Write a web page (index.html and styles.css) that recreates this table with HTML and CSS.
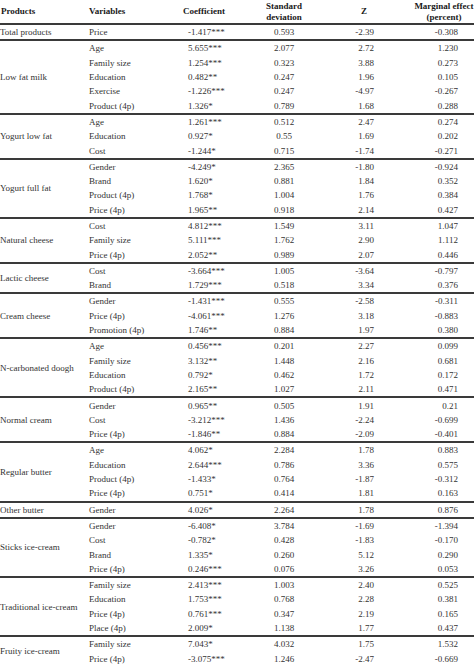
FILE: index.html
```html
<!DOCTYPE html>
<html>
<head>
<meta charset="utf-8">
<link rel="stylesheet" href="styles.css">
</head>
<body>
<table class="tbl">
<colgroup>
<col class="c1"><col class="c2"><col class="c3"><col class="c4"><col class="c5"><col class="c6">
</colgroup>
<thead>
<tr class="hd"><th class="t-l">Products</th><th class="t-l">Variables</th><th>Coefficient</th><th>Standard<br>deviation</th><th>Z</th><th>Marginal effect<br>(percent)</th></tr>
</thead>
<tbody>
<tr class="g"><td class="p">Total products</td><td class="v">Price</td><td class="co">-1.417***</td><td class="sd">0.593</td><td class="z">-2.39</td><td class="me">-0.308</td></tr>

<tr class="g"><td class="p" rowspan="5">Low fat milk</td><td class="v">Age</td><td class="co">5.655***</td><td class="sd">2.077</td><td class="z">2.72</td><td class="me">1.230</td></tr>
<tr class="r"><td class="v">Family size</td><td class="co">1.254***</td><td class="sd">0.323</td><td class="z">3.88</td><td class="me">0.273</td></tr>
<tr class="r"><td class="v">Education</td><td class="co">0.482**</td><td class="sd">0.247</td><td class="z">1.96</td><td class="me">0.105</td></tr>
<tr class="r"><td class="v">Exercise</td><td class="co">-1.226***</td><td class="sd">0.247</td><td class="z">-4.97</td><td class="me">-0.267</td></tr>
<tr class="r"><td class="v">Product (4p)</td><td class="co">1.326*</td><td class="sd">0.789</td><td class="z">1.68</td><td class="me">0.288</td></tr>

<tr class="g"><td class="p" rowspan="3">Yogurt low fat</td><td class="v">Age</td><td class="co">1.261***</td><td class="sd">0.512</td><td class="z">2.47</td><td class="me">0.274</td></tr>
<tr class="r"><td class="v">Education</td><td class="co">0.927*</td><td class="sd">0.55</td><td class="z">1.69</td><td class="me">0.202</td></tr>
<tr class="r"><td class="v">Cost</td><td class="co">-1.244*</td><td class="sd">0.715</td><td class="z">-1.74</td><td class="me">-0.271</td></tr>

<tr class="g"><td class="p" rowspan="4">Yogurt full fat</td><td class="v">Gender</td><td class="co">-4.249*</td><td class="sd">2.365</td><td class="z">-1.80</td><td class="me">-0.924</td></tr>
<tr class="r"><td class="v">Brand</td><td class="co">1.620*</td><td class="sd">0.881</td><td class="z">1.84</td><td class="me">0.352</td></tr>
<tr class="r"><td class="v">Product (4p)</td><td class="co">1.768*</td><td class="sd">1.004</td><td class="z">1.76</td><td class="me">0.384</td></tr>
<tr class="r"><td class="v">Price (4p)</td><td class="co">1.965**</td><td class="sd">0.918</td><td class="z">2.14</td><td class="me">0.427</td></tr>

<tr class="g"><td class="p" rowspan="3">Natural cheese</td><td class="v">Cost</td><td class="co">4.812***</td><td class="sd">1.549</td><td class="z">3.11</td><td class="me">1.047</td></tr>
<tr class="r"><td class="v">Family size</td><td class="co">5.111***</td><td class="sd">1.762</td><td class="z">2.90</td><td class="me">1.112</td></tr>
<tr class="r"><td class="v">Price (4p)</td><td class="co">2.052**</td><td class="sd">0.989</td><td class="z">2.07</td><td class="me">0.446</td></tr>

<tr class="g"><td class="p" rowspan="2">Lactic cheese</td><td class="v">Cost</td><td class="co">-3.664***</td><td class="sd">1.005</td><td class="z">-3.64</td><td class="me">-0.797</td></tr>
<tr class="r"><td class="v">Brand</td><td class="co">1.729***</td><td class="sd">0.518</td><td class="z">3.34</td><td class="me">0.376</td></tr>

<tr class="g"><td class="p" rowspan="3">Cream cheese</td><td class="v">Gender</td><td class="co">-1.431***</td><td class="sd">0.555</td><td class="z">-2.58</td><td class="me">-0.311</td></tr>
<tr class="r"><td class="v">Price (4p)</td><td class="co">-4.061***</td><td class="sd">1.276</td><td class="z">3.18</td><td class="me">-0.883</td></tr>
<tr class="r"><td class="v">Promotion (4p)</td><td class="co">1.746**</td><td class="sd">0.884</td><td class="z">1.97</td><td class="me">0.380</td></tr>

<tr class="g"><td class="p" rowspan="4">N-carbonated doogh</td><td class="v">Age</td><td class="co">0.456***</td><td class="sd">0.201</td><td class="z">2.27</td><td class="me">0.099</td></tr>
<tr class="r"><td class="v">Family size</td><td class="co">3.132**</td><td class="sd">1.448</td><td class="z">2.16</td><td class="me">0.681</td></tr>
<tr class="r"><td class="v">Education</td><td class="co">0.792*</td><td class="sd">0.462</td><td class="z">1.72</td><td class="me">0.172</td></tr>
<tr class="r"><td class="v">Product (4p)</td><td class="co">2.165**</td><td class="sd">1.027</td><td class="z">2.11</td><td class="me">0.471</td></tr>

<tr class="g"><td class="p" rowspan="3">Normal cream</td><td class="v">Gender</td><td class="co">0.965**</td><td class="sd">0.505</td><td class="z">1.91</td><td class="me">0.21</td></tr>
<tr class="r"><td class="v">Cost</td><td class="co">-3.212***</td><td class="sd">1.436</td><td class="z">-2.24</td><td class="me">-0.699</td></tr>
<tr class="r"><td class="v">Price (4p)</td><td class="co">-1.846**</td><td class="sd">0.884</td><td class="z">-2.09</td><td class="me">-0.401</td></tr>

<tr class="g"><td class="p" rowspan="4">Regular butter</td><td class="v">Age</td><td class="co">4.062*</td><td class="sd">2.284</td><td class="z">1.78</td><td class="me">0.883</td></tr>
<tr class="r"><td class="v">Education</td><td class="co">2.644***</td><td class="sd">0.786</td><td class="z">3.36</td><td class="me">0.575</td></tr>
<tr class="r"><td class="v">Product (4p)</td><td class="co">-1.433*</td><td class="sd">0.764</td><td class="z">-1.87</td><td class="me">-0.312</td></tr>
<tr class="r"><td class="v">Price (4p)</td><td class="co">0.751*</td><td class="sd">0.414</td><td class="z">1.81</td><td class="me">0.163</td></tr>

<tr class="g"><td class="p">Other butter</td><td class="v">Gender</td><td class="co">4.026*</td><td class="sd">2.264</td><td class="z">1.78</td><td class="me">0.876</td></tr>

<tr class="g"><td class="p" rowspan="4">Sticks ice-cream</td><td class="v">Gender</td><td class="co">-6.408*</td><td class="sd">3.784</td><td class="z">-1.69</td><td class="me">-1.394</td></tr>
<tr class="r"><td class="v">Cost</td><td class="co">-0.782*</td><td class="sd">0.428</td><td class="z">-1.83</td><td class="me">-0.170</td></tr>
<tr class="r"><td class="v">Brand</td><td class="co">1.335*</td><td class="sd">0.260</td><td class="z">5.12</td><td class="me">0.290</td></tr>
<tr class="r"><td class="v">Price (4p)</td><td class="co">0.246***</td><td class="sd">0.076</td><td class="z">3.26</td><td class="me">0.053</td></tr>

<tr class="g"><td class="p" rowspan="4">Traditional ice-cream</td><td class="v">Family size</td><td class="co">2.413***</td><td class="sd">1.003</td><td class="z">2.40</td><td class="me">0.525</td></tr>
<tr class="r"><td class="v">Education</td><td class="co">1.753***</td><td class="sd">0.768</td><td class="z">2.28</td><td class="me">0.381</td></tr>
<tr class="r"><td class="v">Price (4p)</td><td class="co">0.761***</td><td class="sd">0.347</td><td class="z">2.19</td><td class="me">0.165</td></tr>
<tr class="r"><td class="v">Place (4p)</td><td class="co">2.009*</td><td class="sd">1.138</td><td class="z">1.77</td><td class="me">0.437</td></tr>

<tr class="g"><td class="p" rowspan="2">Fruity ice-cream</td><td class="v">Family size</td><td class="co">7.043*</td><td class="sd">4.032</td><td class="z">1.75</td><td class="me">1.532</td></tr>
<tr class="r"><td class="v">Price (4p)</td><td class="co">-3.075***</td><td class="sd">1.246</td><td class="z">-2.47</td><td class="me">-0.669</td></tr>
</tbody>
</table>
</body>
</html>
```

FILE: styles.css
```css
html, body {
  margin: 0;
  padding: 0;
  background: #ffffff;
  overflow: hidden;
}

body {
  width: 474px;
  height: 666px;
}

.tbl {
  width: 492px;
  table-layout: fixed;
  border-collapse: separate;
  border-spacing: 0;
  font-family: "Liberation Serif", "Times New Roman", serif;
  font-size: 9px;
  color: #333333;
}

.c1 { width: 88px; }
.c2 { width: 84px; }
.c3 { width: 64px; }
.c4 { width: 96px; }
.c5 { width: 64px; }
.c6 { width: 96px; }

.hd { height: 23px; }

.hd th {
  padding: 0;
  line-height: 11px;
  font-weight: bold;
  color: #1a1a1a;
  text-align: center;
  vertical-align: middle;
  white-space: nowrap;
}

.hd th.t-l {
  text-align: left;
}

.hd th:first-child {
  padding-left: 1px;
}

.hd th:nth-child(2) {
  padding-left: 1px;
}

td {
  padding: 0;
  line-height: 10px;
  vertical-align: middle;
  white-space: nowrap;
}

.r { height: 14.3px; }
.g { height: 16.3px; }

.g td {
  border-top: 2px solid #3a3a3a;
}

.p {
  padding-left: 0;
  text-align: left;
}

.v {
  padding-left: 1px;
  text-align: left;
}

.co {
  padding-left: 16px;
  text-align: left;
}

.sd {
  text-align: center;
}

.z {
  text-align: right;
  padding-right: 22px;
}

.me {
  text-align: right;
  padding-right: 34px;
}
```
